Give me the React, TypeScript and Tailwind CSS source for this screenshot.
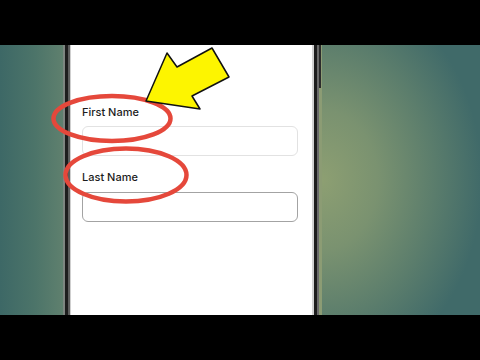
export default function App() {
  return (
    <div className="relative flex h-[360px] w-[480px] flex-col overflow-hidden bg-black font-['Inter','Liberation_Sans',sans-serif]">
      <div className="h-[45px] bg-black" />

      <div className="flex h-[270px]">
        {/* blurred wallpaper, left */}
        <div className="w-[63px] bg-[linear-gradient(90deg,#3d6866_0%,#4c7469_55%,#5f806e_100%)]" />

        {/* phone */}
        <div className="flex w-[259px]">
          <div className="w-[2px] bg-[#7d8580]" />
          <div className="w-[3px] bg-[#1d1d1d]" />
          <div className="w-[2px] bg-[#5c5c5c]" />
          <div className="w-[1px] bg-[#cfcfcf]" />

          <div className="flex flex-1 flex-col bg-white pl-[11px] pr-[14px] pt-[60px]">
            <label className="text-[11px] leading-[14px] font-medium text-[#1c1c1c]">First Name</label>
            <div className="mt-[7px] h-[30px] rounded-[6px] border border-[#e2e2e2]" />
            <label className="mt-[14px] text-[11px] leading-[14px] font-medium text-[#1c1c1c]">Last Name</label>
            <div className="mt-[8px] h-[30px] rounded-[6px] border border-[#a3a3a3]" />
          </div>

          <div className="w-[2px] bg-[#d2d2d2]" />
          <div className="w-[3px] bg-[#1d1d1d]" />
          <div className="w-[2px] bg-[#6a6a6a]" />
          <div className="flex w-[3px] flex-col bg-[#8c9c74]">
            <div className="mt-[0px] h-[43px] w-[2px] bg-[#2b2b2b]" />
          </div>
        </div>

        {/* blurred wallpaper, right */}
        <div className="flex-1 bg-[radial-gradient(ellipse_160px_200px_at_0%_50%,#8d9f72_0%,#7a9270_35%,#5b7d6c_70%,#406a69_100%)]" />
      </div>

      <div className="h-[45px] bg-black" />

      {/* annotations */}
      <svg className="pointer-events-none absolute left-0 top-0" width="480" height="360" viewBox="0 0 480 360">
        <ellipse cx="112" cy="118.5" rx="58.5" ry="22.5" fill="none" stroke="#e5483b" strokeWidth="4.5" />
        <ellipse cx="126" cy="175" rx="60.5" ry="26.5" fill="none" stroke="#e5483b" strokeWidth="4.5" />
        <polygon
          points="146,101 167,53 177,67 212,48 229,77 192,96 200,109"
          fill="#fdf500"
          stroke="#111"
          strokeWidth="1.5"
          strokeLinejoin="round"
        />
      </svg>
    </div>
  );
}
